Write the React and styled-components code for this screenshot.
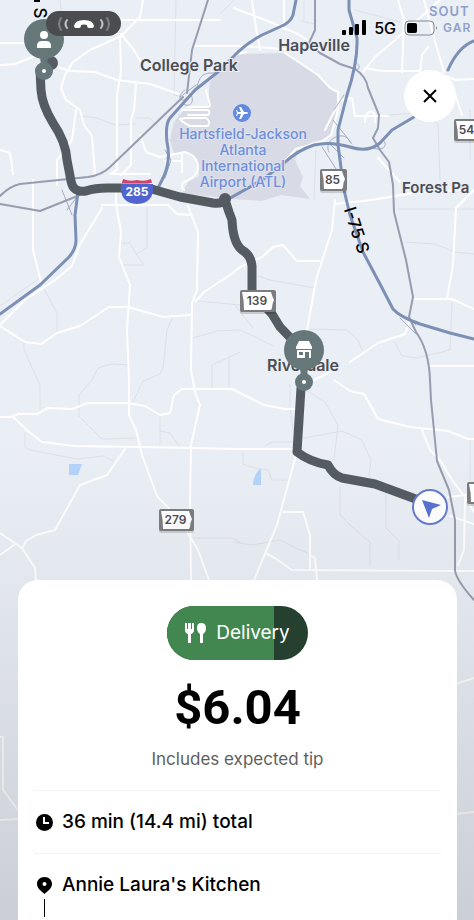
import React from 'react';
import styled, { createGlobalStyle } from 'styled-components';

const GlobalStyle = createGlobalStyle`
  * {
    box-sizing: border-box;
  }

  body {
    margin: 0;
    background: #eaeef5;
    font-family: Inter, 'Liberation Sans', sans-serif;
    color: #000;
  }
`;

const Screen = styled.div`
  position: relative;
  min-height: 100vh;
  display: flex;
  flex-direction: column;
  overflow: hidden;
`;

const MapLayer = styled.div`
  position: absolute;
  inset: 0;
  z-index: -1;

  &::after {
    content: '';
    position: absolute;
    inset: 0;
    background: linear-gradient(
      rgba(60, 62, 70, 0) 48%,
      rgba(60, 62, 70, 0.04) 62%,
      rgba(60, 62, 70, 0.18) 100%
    );
  }
`;

const MapSvg = styled.svg`
  display: block;
  width: 100%;
  height: 100%;
`;

const Roads = styled.g`
  fill: none;
  stroke: ${(props) => props.$color};
  stroke-width: ${(props) => props.$width};
  stroke-linecap: round;
  stroke-linejoin: round;
`;

const MapText = styled.text`
  font-family: Inter, 'Liberation Sans', sans-serif;
  font-size: ${(props) => props.$size || 16}px;
  font-weight: ${(props) => props.$weight || 600};
  fill: ${(props) => props.$color || '#4b4d52'};
  stroke: ${(props) => props.$halo || 'none'};
  stroke-width: 2px;
  paint-order: stroke;
  text-anchor: ${(props) => props.$anchor || 'middle'};
`;

const DistrictText = styled(MapText)`
  letter-spacing: 1px;
`;

const StatusBar = styled.header`
  display: flex;
  justify-content: space-between;
  align-items: center;
  padding: 11px 36px 0 46px;
`;

const CallButton = styled.button`
  display: flex;
  align-items: center;
  justify-content: center;
  width: 75px;
  height: 25px;
  padding: 0;
  border: none;
  border-radius: 13px;
  background: #4b4c4f;
`;

const StatusIcons = styled.div`
  display: flex;
  align-items: center;
  gap: 8px;
  padding-top: 8px;
  font-size: 16px;
  line-height: 16px;
  font-weight: 500;
`;

const CloseButton = styled.button`
  align-self: flex-end;
  display: flex;
  align-items: center;
  justify-content: center;
  width: 52px;
  height: 52px;
  margin: 34px 18px 0;
  padding: 0;
  border: none;
  border-radius: 50%;
  background: #fff;
`;

const Sheet = styled.main`
  display: flex;
  flex-direction: column;
  align-items: center;
  margin: auto 17px 0 18px;
  padding: 26px 16px 3px;
  border-radius: 20px 20px 0 0;
  background: #fff;
`;

const TripBadge = styled.div`
  position: relative;
  display: flex;
  align-items: center;
  gap: 9px;
  height: 54px;
  padding: 0 18px;
  border-radius: 27px;
  overflow: hidden;
  background: #25402e;
  color: #fff;
  font-size: 19px;
  line-height: 24px;
`;

const TimeLeft = styled.div`
  position: absolute;
  inset: 0 auto 0 0;
  background: #41874f;
`;

const BadgeLabel = styled.span`
  position: relative;
`;

const BadgeIcon = styled.svg`
  position: relative;
  display: block;
`;

const Price = styled.h1`
  margin: 20px 0 0;
  font-family: Roboto, 'Liberation Sans', sans-serif;
  font-size: 49px;
  line-height: 56px;
  font-weight: 700;
`;

const Caption = styled.p`
  margin: 11px 0 19px;
  color: #5e5e5e;
  font-size: 17px;
  line-height: 24px;
`;

const Details = styled.ul`
  align-self: stretch;
  margin: 0;
  padding: 0;
  list-style: none;
`;

const Detail = styled.li`
  display: flex;
  align-items: center;
  gap: 9px;
  padding: 19px 2px;
  border-top: 1px solid #f3f3f3;
  font-size: 19px;
  line-height: 24px;
  font-weight: 500;
`;

const Stop = styled(Detail)`
  padding-bottom: 2px;
`;

const Connector = styled.div`
  align-self: flex-start;
  width: 1px;
  height: 18px;
  margin-left: 10px;
  background: #000;
`;

const minorRoads = [
  'M70 28 L120 32 M60 0 L62 20 M176 0 L174 95 L183 97',
  'M80 116 L97 118 L115 125 L135 124 M137 118 L150 118 L158 127',
  'M147 208 L147 248 L136 254 L130 243 L121 243 M136 254 L144 265 H121',
  'M45 291 L57 313 V331 M0 306 L37 280 M24 342 L24 350 L40 385 V410',
  'M173 316 L167 330 L163 368 L160 374 L143 381 L133 402 M196 301 L240 305',
  'M193 338 L217 331 L240 330 M212 388 V365 L225 359 L240 352 M229 387 V359',
  'M129 365 L112 364 L98 368 L92 380 L79 395 V416 L102 439 L137 438',
  'M25 433 V447 L30 450 L77 459 L104 456 L113 461 M160 416 V447 M160 431 L170 433 L179 446',
  'M240 330 L253 336 L273 346 M234 304 L253 328 M258 276 L270 280 L315 288',
  'M310 329 L347 330 L358 340 L362 350 M405 242 L435 244 L455 252 L474 254 M398 209 H474',
  'M394 341 L402 356 L417 358 L450 350 L452 303',
  'M290 384 L290 405 L293 430 M306 390 L325 402 L338 425 L334 460 M304 438 L342 431 L362 440 L371 460 L369 476',
  'M265 446 L272 442 H295 M243 452 V464 L255 468 L268 470 L272 480 H288',
  'M340 487 V515 L352 527 L370 542 V566 M386 490 V528 L399 541 L399 560 M470 440 V480',
  'M234 542 L252 545 L280 540 L298 549 L312 555 M194 538 L232 538 L240 542',
  'M304 0 V21 M301 21 L315 24 M388 115 L420 113 L438 124 L440 180 M234 0 L220 14',
  'M316 150 L314 200 M470 110 V160 M355 10 L400 22',
];

const localRoads = [
  'M0 43 L25 43 M60 18 L130 20 L220 20 M143 0 L140 17 L121 36 L90 50 L73 62 L65 75 L61 88 L66 100 L80 110 L84 125 L92 136 L95 175',
  'M48 64 L70 71 L95 72 L117 80 L150 84 L182 95 M0 65 L15 64 L40 54 L52 50',
  'M120 36 L121 72 L117 95 V170 L110 174 H150 M121 34 L134 50 L142 64',
  'M136 84 L134 110 L131 120 V165 L121 175 M76 110 L72 140 L57 160 L57 185',
  'M195 46 L240 46 L300 50 M140 135 L146 152 L160 157 L185 152 Q198 156 198 168 Q197 176 188 180 Q178 184 184 190',
  'M102 205 H168 L177 214 L190 215 M102 208 L80 244 L72 266 L55 280 L25 300 L0 325',
  'M33 180 L33 250 L41 282 M0 150 L10 153 L13 174 M182 154 V172 M165 161 H182',
  'M116 185 L116 205 L121 232 L119 257 L130 285 L127 330 L129 380',
  'M188 206 L198 232 L197 290 L192 303 L191 370 L195 392 L200 405 L191 445 L190 500 L191 580',
  'M0 326 L25 342 L41 344 L57 333 L80 326 L109 307 L128 307 L163 317 L191 315',
  'M196 301 L204 292 L230 275 L240 267 L262 257 L273 247 L283 245 L297 261 H320',
  'M0 417 H12 L18 414 H37 L48 408 L72 409 L88 403 H128 L145 406 L160 415 L170 413 L174 395 L182 389 H232 L252 399 L264 405 L285 409 H300',
  'M12 416 L28 431 L42 442 L75 446 L140 447 L240 449 H297',
  'M129 380 V415 L136 430 L142 455 L157 496 L180 520 L198 550 L209 580',
  'M125 449 L107 475 L80 485 L55 530 L36 535 L26 541 L23 547 M0 533 L22 548 L35 568 L36 582 M0 555 L14 545',
  'M296 455 L277 525 L254 580 M283 512 H303 L310 535 V568 M267 554 L275 558 L292 570 L455 571 H474 M310 555 L315 558 L317 580',
  'M335 200 L332 230 L316 280 L307 330 M335 204 L372 200 L412 193 L460 190',
  'M474 190 L456 208 L453 265 L447 298 M414 299 H452 L474 309',
  'M314 380 L330 372 M334 380 L350 391 L364 394 L378 419 L410 427 L448 431 L468 439 H474 M422 430 L430 450 L440 460 L452 480 L465 497 L474 512',
  'M350 362 L378 343 L405 334 L410 320 M430 366 H474 M465 497 L464 550 L458 565 M448 497 L474 494 M450 516 L474 524',
  'M398 0 L404 20 L402 72 M424 0 L436 45 L444 72 M420 71 L382 71 L365 68 M363 72 L375 57 L395 40 L440 0',
  'M444 76 L456 80 L474 79 M420 72 L422 55 L428 47 M452 85 L462 115',
  'M234 8 L270 22 L300 35 L320 50 M252 0 L256 28 L260 50 M284 0 V25 M210 80 L235 55 L246 52',
  'M325 130 L340 100 L352 98 L355 116 H388 M365 122 C365 108 377 108 375 122 M378 158 L400 182',
  'M285 53 L318 75 L330 88 L338 92 L338 110 L331 135 L321 142 L296 149 L286 160',
  'M206 90 L210 105 Q210 107 206 107 H188 M182 110 H208 Q211 112 208 115 H188 M180 119 L186 118 H206 Q211 121 208 126 H190 Q182 122 180 119',
  'M0 737 H3 V790 L18 810 M0 820 L18 819 M456 684 L474 678 M456 814 L474 812',
];

const railways = [
  'M208 0 L192 50 L187 93 M183 97 L110 167 Q102 175 88 177 L20 184 Q10 186 0 196',
  'M0 204 L40 211 L75 197 L95 188',
  'M315 0 V30 L309 43 L320 53 L340 64 L355 69 Q366 76 368 88 L379 115 L378 128 L373 138 L380 150 L389 162 L393 185 L394 212 L406 260 L413 297 L409 317 L416 332 Q429 350 430 380 L431 400 L437 461 L449 490 L455 520 V570 Q456 580 474 600',
];

const ramps = [
  'M180 97 L196 85 M182 103 C190 110 196 100 190 94 M185 90 C176 96 180 104 188 98 M195 92 C200 80 198 72 215 73',
  'M328 142 L344 158 M329 152 C322 140 345 128 350 142 M333 120 L345 135 L352 144 M334 110 L344 95',
  'M322 147 L338 172 M372 147 C380 153 390 146 383 140 M355 62 C362 66 360 72 353 68',
  'M62 190 L72 215 M67 210 L80 193 M165 150 L171 160 L165 178 M400 318 L416 334 M408 318 L416 325',
];

const highways = [
  'M296 0 L293 15 Q291 21 284 25 L262 35 Q245 44 234 56 L218 72 L195 90 L170 118 Q165 124 167 142 Q171 160 164 176 L157 190',
  'M349 0 L349 10 L357 38 Q358 62 347 95 L338 130 V145 L344 190 L350 215 L363 252 L380 284 L393 309 Q400 317 420 324 L450 333 L474 339',
  'M474 41 Q458 47 448 70 M414 117 L392 130 L380 143 Q368 153 350 147 Q330 141 314 145 Q298 150 284 163 L262 180 L225 201',
  'M78 192 L75 215 L76 240 Q76 250 68 258 L40 285 L0 314',
];

const legs = [
  'M40 70 L41 90 Q42 105 53 123 Q66 142 67 160 L71 181 Q73 193 86 191 Q95 188 107 188 L148 188 L180 197 L213 203 Q222 204 225 200 L229 212 L232 220 Q233 243 242 250 Q251 255 252 266 V292 L272 314 L280 327 L304 352',
  'M304 381 L301 388 L297 452 Q310 462 328 465 Q333 475 342 478 L375 484 L413 498 L430 505',
];

const routeShields = [
  { label: '85', x: 320, y: 169, width: 27 },
  { label: '139', x: 240, y: 290, width: 36 },
  { label: '279', x: 159, y: 509, width: 35 },
  { label: '54', x: 454, y: 119, width: 27 },
  { label: '', x: 467, y: 482, width: 27 },
];

const airportName = ['Hartsfield-Jackson', 'Atlanta', 'International', 'Airport (ATL)'];

const offer = {
  type: 'Delivery',
  price: '$6.04',
  note: 'Includes expected tip',
  summary: '36 min (14.4 mi) total',
  pickup: "Annie Laura's Kitchen",
  timeLeft: 76,
};

// state route sign: grey plate with a notched white face
function RouteShield({ label, x, y, width }) {
  return (
    <g transform={`translate(${x} ${y})`}>
      <rect y="1" width={width} height="23" rx="2" fill="#000" opacity="0.15" />
      <rect width={width} height="22" rx="2" fill="#7b7c7f" />
      <path
        d={`M2 2 H${width - 5} Q${width - 4} 6 ${width - 2} 10 Q${width - 4} 14 ${width - 4} 18 L${width - 5} 20 H4 Q4 10 2 2 Z`}
        fill="#fff"
      />
      <MapText x={width / 2 - 1} y="15" $size={12}>
        {label}
      </MapText>
    </g>
  );
}

function InterstateShield() {
  return (
    <g>
      <path d="M123 179 Q130 182 137 180 Q144 182 151 179 L152 183 H122 Z" fill="#cf4468" />
      <path d="M121 184 H153 Q155 203 137 204 Q119 203 121 184 Z" fill="#4f64cf" />
      <MapText x="137" y="196" $size={12} $weight={700} $color="#fff">
        285
      </MapText>
    </g>
  );
}

function Pin({ x, y, children }) {
  return (
    <g transform={`translate(${x} ${y})`}>
      <path d="M-4 18 H4 L3 26 H-3 Z" fill="#66777a" />
      <circle r="20" fill="#66777a" />
      <circle cy="32" r="9" fill="#66777a" />
      <circle cy="32" r="2" fill="#fff" />
      {children}
    </g>
  );
}

function TripMap() {
  return (
    <MapLayer>
      <MapSvg viewBox="0 0 474 920" preserveAspectRatio="xMidYMin slice" role="img" aria-label="Trip route">
        <rect width="474" height="920" fill="#eaeef5" />
        <path
          d="M210 80 L236 54 L285 53 L318 75 L330 88 L338 92 L335 120 L330 138 L312 142 L298 150 L295 160 L303 177 L300 186 L310 199 L281 195 L262 201 L232 199 L182 193 L188 182 L199 176 L198 162 L187 153 L174 154 L170 140 L174 122 L184 110 L208 106 Z"
          fill="#d8dae5"
        />
        <path d="M69 464 H82 L78 475 H69 Z M253 484 Q254 474 261 468 V485 H253 Z" fill="#b3d3fa" />
        <Roads $color="#dee0e6" $width={1}>
          {minorRoads.map((d) => (
            <path key={d} d={d} />
          ))}
        </Roads>
        <Roads $color="#fff" $width={2}>
          {localRoads.map((d) => (
            <path key={d} d={d} />
          ))}
        </Roads>
        <Roads $color="#a3acc2" $width={1}>
          {ramps.map((d) => (
            <path key={d} d={d} />
          ))}
        </Roads>
        <Roads $color="#979caf" $width={2}>
          {railways.map((d) => (
            <path key={d} d={d} />
          ))}
        </Roads>
        <Roads $color="#7c8fb4" $width={3}>
          {highways.map((d) => (
            <path key={d} d={d} />
          ))}
        </Roads>

        <MapText x="189" y="71" $halo="#eaeef5">College Park</MapText>
        <MapText x="314" y="51" $halo="#eaeef5">Hapeville</MapText>
        <MapText x="303" y="371" $halo="#eaeef5">Riverdale</MapText>
        <MapText x="402" y="193" $size={15} $anchor="start" $halo="#eaeef5">Forest Pa</MapText>
        <DistrictText x="429" y="16" $size={13} $anchor="start" $color="#8f9fca">SOUT</DistrictText>
        <DistrictText x="443" y="32" $size={12} $anchor="start" $color="#8f9fca">GAR</DistrictText>

        <circle cx="242" cy="113" r="9" fill="#628ae2" />
        <path
          d="M248 113 Q248 112 246 112 H244 L241 107 H239 L241 112 H238 L237 110 H236 L237 113 L236 116 H237 L238 114 H241 L239 119 H241 L244 114 H246 Q248 114 248 113 Z"
          fill="#fff"
        />
        {airportName.map((line, index) => (
          <MapText key={line} x="243" y={139 + index * 16} $size={14} $weight={500} $color="#6f8fdc" $halo="#dfe2ec">
            {line}
          </MapText>
        ))}

        <Roads $color="#545c62" $width={9}>
          {legs.map((d) => (
            <path key={d} d={d} />
          ))}
        </Roads>
        <circle cx="225" cy="199" r="6" fill="#545c62" />
        <circle cx="51" cy="63" r="7" fill="#545c62" />

        <MapText $size={17} $weight={500} $color="#000" transform="translate(34 13) rotate(90)">
          S
        </MapText>
        <path d="M34 0 H40 V2 H34 Z" />
        <MapText $size={17} $weight={500} $color="#000" transform="translate(351 232) rotate(72)">
          I-75 S
        </MapText>

        <InterstateShield />
        {routeShields.map((shield) => (
          <RouteShield key={shield.x} {...shield} />
        ))}

        <Pin x={44} y={39}>
          <circle cy="-4" r="4" fill="#fff" />
          <path d="M-7 9 V7 Q-7 2 -2 2 H2 Q7 2 7 7 V9 Z" fill="#fff" />
        </Pin>
        <Pin x={304} y={350}>
          <path d="M-5 -9 H5 L8 -3 V-1 H-8 V-3 Z" fill="#fff" />
          <path d="M-7 0 H7 V8 H5 V2 H1 V8 H-7 Z M-5 2 V5 H-1 V2 Z" fill="#fff" fillRule="evenodd" />
        </Pin>

        <circle cx="430" cy="507" r="17" fill="#fff" stroke="#667bd0" strokeWidth="2" />
        <path d="M422 500 L441 505 L432 509 L429 518 Z" fill="#5872d2" />
      </MapSvg>
    </MapLayer>
  );
}

function CallIcon() {
  return (
    <svg width="52" height="16" viewBox="0 0 52 16" fill="none" strokeWidth="2" strokeLinecap="round">
      <path
        d="M16 10 Q17 4 26 4 Q35 4 36 10 Q36 12 34 12 H31 Q29 12 29 9 Q26 8 23 9 Q23 12 21 12 H18 Q16 12 16 10 Z"
        fill="#fff"
      />
      <path d="M9 4 Q6 8 9 12 M43 4 Q46 8 43 12" stroke="#c4c4c6" />
      <path d="M3 2 Q-1 8 3 14 M49 2 Q53 8 49 14" stroke="#808184" />
    </svg>
  );
}

function App() {
  return (
    <>
      <GlobalStyle />
      <Screen>
        <TripMap />
        <StatusBar>
          <CallButton aria-label="Return to call">
            <CallIcon />
          </CallButton>
          <StatusIcons>
            <svg width="24" height="15" viewBox="0 0 24 15">
              <rect y="10" width="4" height="5" rx="1" />
              <rect x="7" y="7" width="4" height="8" rx="1" />
              <rect x="13" y="4" width="4" height="11" rx="1" />
              <rect x="20" width="4" height="15" rx="1" />
            </svg>
            5G
            <svg width="34" height="16" viewBox="0 0 34 16">
              <rect x="1" y="1" width="29" height="14" rx="4" fill="none" stroke="#85888e" />
              <rect x="3" y="3" width="10" height="10" rx="2" />
              <path d="M32 6 Q34 8 32 10 Z" fill="#85888e" />
            </svg>
          </StatusIcons>
        </StatusBar>
        <CloseButton aria-label="Close">
          <svg width="14" height="14" viewBox="0 0 14 14" stroke="#000" strokeWidth="2">
            <path d="M1 1 L13 13 M13 1 L1 13" />
          </svg>
        </CloseButton>

        <Sheet>
          <TripBadge>
            <TimeLeft style={{ width: `${offer.timeLeft}%` }} />
            <BadgeIcon width="22" height="22" viewBox="0 0 22 22" fill="#fff">
              <path d="M0 1 H2 V7 H3 V1 H6 V7 H7 V1 H9 V8 Q9 11 6 12 V21 H3 V12 Q0 11 0 8 Z" />
              <path d="M16 1 Q21 1 21 6 Q21 10 18 12 V21 H15 V12 Q12 10 12 6 Q12 1 16 1 Z" />
            </BadgeIcon>
            <BadgeLabel>{offer.type}</BadgeLabel>
          </TripBadge>
          <Price>{offer.price}</Price>
          <Caption>{offer.note}</Caption>
          <Details>
            <Detail>
              <svg width="17" height="17" viewBox="0 0 17 17">
                <circle cx="8.5" cy="8.5" r="8.5" />
                <path d="M8 3 V9 H13" fill="none" stroke="#fff" strokeWidth="2" />
              </svg>
              {offer.summary}
            </Detail>
            <Stop>
              <svg width="17" height="17" viewBox="0 0 17 17">
                <path d="M8.5 0 C4 0 1 3 1 7 C1 11 5 14 8.5 17 C12 14 16 11 16 7 C16 3 13 0 8.5 0 Z" />
                <circle cx="8.5" cy="7" r="2" fill="#fff" />
              </svg>
              {offer.pickup}
            </Stop>
          </Details>
          <Connector />
        </Sheet>
      </Screen>
    </>
  );
}

export default App;
